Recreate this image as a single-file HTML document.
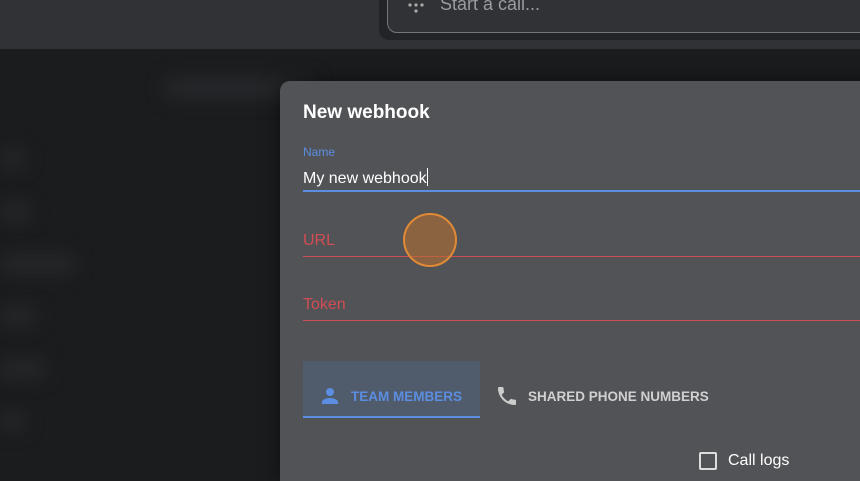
<!DOCTYPE html>
<html style="overflow:hidden;height:481px"><head><style>
body{margin:0;width:860px;height:481px;overflow:hidden;background:#1b1c1e;font-family:"Liberation Sans",Roboto,sans-serif;position:relative}
.top{position:absolute;left:0;top:0;width:860px;height:49px;background:#313236}
.sbo{position:absolute;left:379px;top:-10px;width:500px;height:50px;background:#232427;border-radius:10px}
.sbi{position:absolute;left:387px;top:-20px;width:490px;height:51px;background:#313236;border:1px solid #75767a;border-radius:10px}
.blur{position:absolute;background:#27282b;filter:blur(9px);border-radius:6px}
.dlg{position:absolute;left:280px;top:81px;width:600px;height:400px;background:#525357;border-radius:10px 0 0 0;box-shadow:0 0 20px rgba(0,0,0,.5)}
.a{position:absolute;white-space:nowrap}
</style></head><body>
<div class="top"></div>
<div class="sbo"></div><div class="sbi"></div>
<svg class="a" style="left:406px;top:1px" width="20" height="14"><circle cx="4" cy="4" r="1.6" fill="#aaa"/><circle cx="10" cy="4" r="1.6" fill="#aaa"/><circle cx="16" cy="4" r="1.6" fill="#aaa"/><circle cx="10" cy="10" r="1.6" fill="#aaa"/></svg>
<div class="a" style="left:440px;top:-6px;color:#9a9b9e;font-size:18px">Start a call...</div>
<div class="blur" style="left:165px;top:78px;width:150px;height:20px"></div>
<div class="blur" style="left:0;top:150px;width:25px;height:18px"></div>
<div class="blur" style="left:0;top:203px;width:30px;height:18px"></div>
<div class="blur" style="left:0;top:255px;width:75px;height:18px"></div>
<div class="blur" style="left:0;top:307px;width:35px;height:18px"></div>
<div class="blur" style="left:0;top:360px;width:45px;height:18px"></div>
<div class="blur" style="left:0;top:412px;width:25px;height:18px"></div>
<div class="dlg"></div>
<div class="a" style="left:303px;top:102px;color:#fff;font-size:19px;font-weight:bold">New webhook</div>
<div class="a" style="left:303px;top:145px;color:#5b8ee0;font-size:12px">Name</div>
<div class="a" style="left:303px;top:168px;color:#fff;font-size:16px">My new webhook<span style="display:inline-block;width:1px;height:18px;background:#fff;vertical-align:-3px"></span></div>
<div class="a" style="left:303px;top:190px;width:557px;height:2px;background:#5b8ee0"></div>
<div class="a" style="left:303px;top:232px;color:#d24d53;font-size:16px">URL</div>
<div class="a" style="left:303px;top:256px;width:557px;height:1px;background:#d24d53"></div>
<div class="a" style="left:303px;top:296px;color:#d24d53;font-size:16px">Token</div>
<div class="a" style="left:303px;top:320px;width:557px;height:1px;background:#d24d53"></div>
<div class="a" style="left:403px;top:213px;width:50px;height:50px;border-radius:50%;background:rgba(180,110,50,.6);border:2px solid #e08a36"></div>
<div class="a" style="left:303px;top:361px;width:177px;height:55px;background:#505b6c"></div>
<div class="a" style="left:303px;top:416px;width:177px;height:2px;background:#5b8ee0"></div>
<svg class="a" style="left:318px;top:384px" width="24" height="24" viewBox="0 0 24 24"><path fill="#5b8ee0" d="M12 12c2.2 0 4-1.8 4-4s-1.8-4-4-4-4 1.8-4 4 1.8 4 4 4zm0 2c-2.7 0-8 1.3-8 4v2h16v-2c0-2.7-5.3-4-8-4z"/></svg>
<div class="a" style="left:351px;top:389px;color:#5b8ee0;font-size:13.5px;font-weight:bold">TEAM MEMBERS</div>
<svg class="a" style="left:495px;top:384px" width="24" height="24" viewBox="0 0 24 24"><path fill="#ccc" d="M6.6 10.8c1.4 2.8 3.8 5.1 6.6 6.6l2.2-2.2c.3-.3.7-.4 1-.2 1.1.4 2.300.6 3.6.6.6 0 1 .4 1 1V20c0 .6-.4 1-1 1C10.6 21 3 13.4 3 4c0-.6.4-1 1-1h3.5c.6 0 1 .4 1 1 0 1.3.2 2.5.6 3.6.1.3 0 .7-.2 1L6.6 10.8z"/></svg>
<div class="a" style="left:528px;top:389px;color:#d0d0d2;font-size:13.5px;font-weight:bold">SHARED PHONE NUMBERS</div>
<div class="a" style="left:699px;top:452px;width:14px;height:14px;border:2px solid #ddd;border-radius:2px"></div>
<div class="a" style="left:728px;top:452px;color:#fff;font-size:16px">Call logs</div>
</body></html>
